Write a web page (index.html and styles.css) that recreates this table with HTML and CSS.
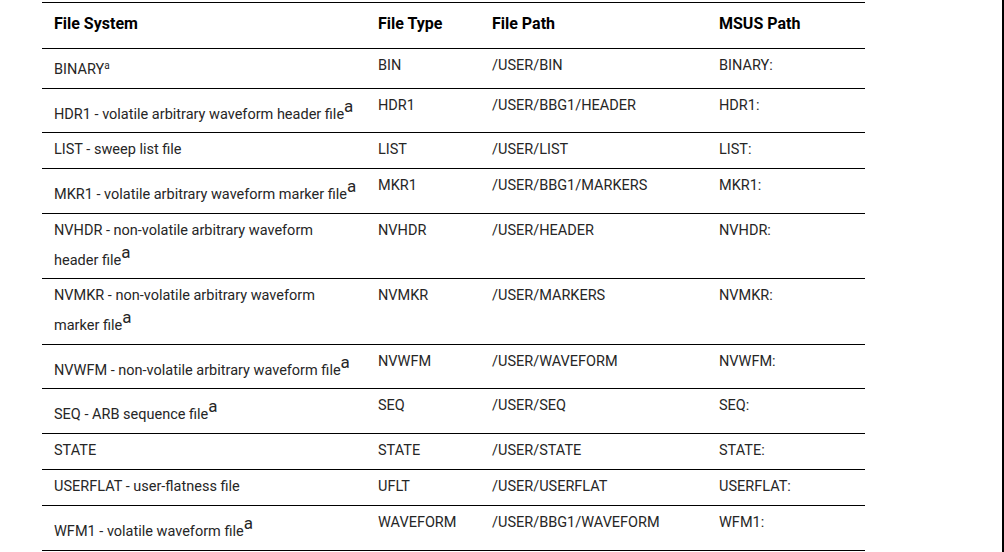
FILE: index.html
```html
<!DOCTYPE html>
<html>
<head>
<meta charset="utf-8">
<link rel="stylesheet" href="styles.css">
</head>
<body>
<div class="page">
  <div class="content">
    <table class="fs">
      <colgroup>
        <col class="c1"><col class="c2"><col class="c3"><col class="c4">
      </colgroup>
      <thead>
        <tr><th>File System</th><th>File Type</th><th>File Path</th><th>MSUS Path</th></tr>
      </thead>
      <tbody>
        <tr><td>BINARY<sup class="sm">a</sup></td><td>BIN</td><td>/USER/BIN</td><td>BINARY:</td></tr>
        <tr><td>HDR1 - volatile arbitrary waveform header file<sup>a</sup></td><td>HDR1</td><td>/USER/BBG1/HEADER</td><td>HDR1:</td></tr>
        <tr><td>LIST - sweep list file</td><td>LIST</td><td>/USER/LIST</td><td>LIST:</td></tr>
        <tr><td>MKR1 - volatile arbitrary waveform marker file<sup>a</sup></td><td>MKR1</td><td>/USER/BBG1/MARKERS</td><td>MKR1:</td></tr>
        <tr><td>NVHDR - non-volatile arbitrary waveform header file<sup>a</sup></td><td>NVHDR</td><td>/USER/HEADER</td><td>NVHDR:</td></tr>
        <tr><td>NVMKR - non-volatile arbitrary waveform marker file<sup>a</sup></td><td>NVMKR</td><td>/USER/MARKERS</td><td>NVMKR:</td></tr>
        <tr><td>NVWFM - non-volatile arbitrary waveform file<sup>a</sup></td><td>NVWFM</td><td>/USER/WAVEFORM</td><td>NVWFM:</td></tr>
        <tr><td>SEQ - ARB sequence file<sup>a</sup></td><td>SEQ</td><td>/USER/SEQ</td><td>SEQ:</td></tr>
        <tr><td>STATE</td><td>STATE</td><td>/USER/STATE</td><td>STATE:</td></tr>
        <tr><td>USERFLAT - user-flatness file</td><td>UFLT</td><td>/USER/USERFLAT</td><td>USERFLAT:</td></tr>
        <tr><td>WFM1 - volatile waveform file<sup>a</sup></td><td>WAVEFORM</td><td>/USER/BBG1/WAVEFORM</td><td>WFM1:</td></tr>
      </tbody>
    </table>
  </div>
  <div class="edge"></div>
</div>
</body>
</html>
```

FILE: styles.css
```css
html, body {
  margin: 0;
  padding: 0;
  background: #fff;
}
.page {
  display: flex;
  width: 1004px;
  height: 552px;
  overflow: hidden;
}
.content {
  flex: 1;
  padding: 2px 0 0 42px;
}
.edge {
  width: 2px;
  background: #000;
  height: 552px;
}
.fs {
  border-collapse: collapse;
  table-layout: fixed;
  width: 823px;
  font-family: Roboto, "Liberation Sans", sans-serif;
  color: #262626;
}
.c1 { width: 324px; }
.c2 { width: 114px; }
.c3 { width: 227px; }
.c4 { width: 158px; }
.fs th {
  text-align: left;
  font-size: 16px;
  font-weight: bold;
  color: #000;
  line-height: 24px;
  padding: 9px 8px 12px 12px;
  border-top: 1px solid #000;
  border-bottom: 1px solid #000;
}
.fs td {
  font-size: 14.5px;
  line-height: 20.4px;
  padding: 7px 8px 7.6px 12px;
  vertical-align: top;
  border-bottom: 1px solid #000;
}
.fs sup {
  font-size: 17px;
  vertical-align: 6.8px;
}
.fs sup.sm {
  font-size: 10px;
  vertical-align: 4.5px;
}
```
